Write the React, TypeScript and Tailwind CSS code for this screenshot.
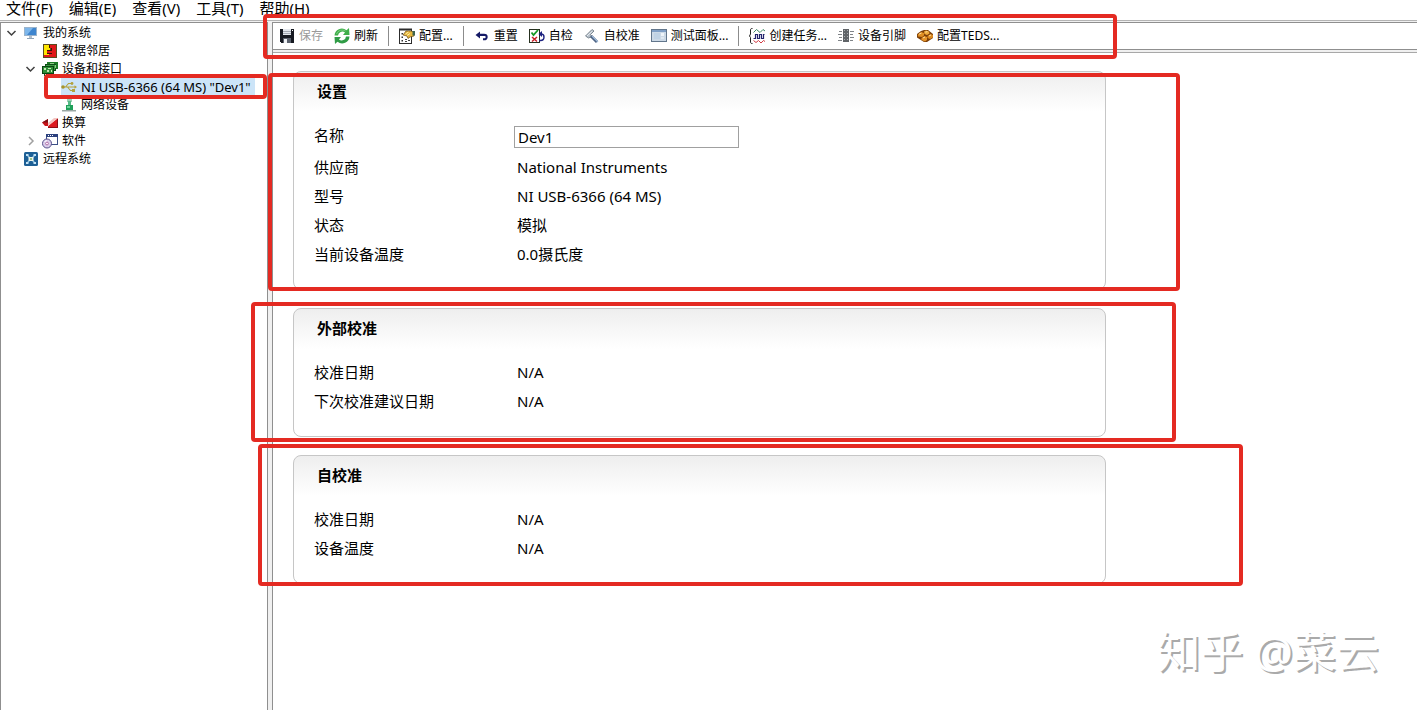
import type { ReactNode } from 'react';

/* ---------- icons ---------- */

function Icon({ children, crisp = false }: { children: ReactNode; crisp?: boolean }) {
  return (
    <svg
      viewBox="0 0 16 16"
      className="size-4 shrink-0"
      fill="none"
      aria-hidden="true"
      shapeRendering={crisp ? 'crispEdges' : 'auto'}
    >
      {children}
    </svg>
  );
}

const MonitorIcon = () => (
  <Icon>
    <rect x="1" y="2" width="13" height="9" fill="#9bb4cc" />
    <rect x="2" y="3" width="11" height="7" fill="#3f86cf" />
    <path d="M2 3h8L4 10H2z" fill="#7db6ea" />
    <path d="M6 11h3v2H6z" fill="#b4bfca" />
    <path d="M4 13h7v1H4z" fill="#90a4b8" />
  </Icon>
);

const NeighborhoodIcon = () => (
  <Icon crisp>
    <rect x="1" y="1" width="14" height="14" fill="#5a4a20" />
    <path d="M2 2h6v12H2z" fill="#ffe600" />
    <path d="M7 2h7v12H2v-2h5v-2H5V7h4V5H7z" fill="#e01818" />
    <path d="M2 2h5v3H5v5h2v2H2z" fill="#ffe600" />
    <path d="M7 2h1v3H7zM5 7h4v1H5zM5 10h5v1H5zM9 5h1v3H9z" fill="#3a1208" />
  </Icon>
);

const BoardsIcon = () => (
  <Icon crisp>
    <path d="M5 1h11v7H5z" fill="#1d7a26" />
    <path d="M3 3h11v7H3z" fill="#0e4f17" />
    <path d="M4 4h9v5H4z" fill="#3c9c42" />
    <path d="M0 5h12v8H0z" fill="#0b4413" />
    <path d="M1 6h10v6H1z" fill="#2f9038" />
    <path d="M2 7h2v2H2zM6 7h3v1H6zM5 9h2v2H5zM9 9h1v2H9z" fill="#c8e8b8" />
    <path d="M2 13h1v2H2zM4 13h1v2H4zM6 13h1v2H6zM8 13h1v2H8z" fill="#15601e" />
    <path d="M8 2h4v1H8zM13 4h1v3h-1z" fill="#8fca88" />
  </Icon>
);

const UsbIcon = () => (
  <Icon>
    <g stroke="#b3a23c" strokeWidth="1.1">
      <path d="M2 8h12M4.500 8l3-3.500h2.500M6.500 8l3 3.500h2" />
    </g>
    <circle cx="2" cy="8" r="1.800" fill="#a8952c" />
    <circle cx="11" cy="4.500" r="1.400" fill="#b3a23c" />
    <path d="M11 10h3v3h-3zM13.500 6.300 16 8l-2.500 1.700z" fill="#b3a23c" />
  </Icon>
);

const NetworkIcon = () => (
  <Icon>
    <path d="M6 1h5v4H6z" fill="#9bd0b4" />
    <path d="M7 4h3v5H7z" fill="#57b987" />
    <path d="M5 8h7v5H5z" fill="#1fa05a" />
    <path d="M6 9h3v2H6z" fill="#6fd59b" />
    <path d="M1 13h14v1.500H1z" fill="#9aa8a4" />
  </Icon>
);

const ScaleIcon = () => (
  <Icon>
    <path d="M0 7.500 6 4v7H3z" fill="#c8141a" />
    <path d="M0 7.500 6 4v3.500z" fill="#7e1014" />
    <path d="M6 11 16 3v10H6z" fill="#dc1b20" />
    <path d="M6 11V8L12 3h4z" fill="#f4c6c2" />
    <path d="M6 12.500h10M15.500 4v9" stroke="#8e0f14" />
  </Icon>
);

const SoftwareIcon = () => (
  <Icon>
    <rect x="4.500" y="1.500" width="11" height="10" fill="#fff" stroke="#3c4f86" />
    <path d="M4 1h12v3H4z" fill="#2c417e" />
    <path d="M6 2h1v1H6zM8 2h1v1H8zM10 2h1v1h-1z" fill="#fff" />
    <circle cx="5" cy="10.500" r="4.500" fill="#d9cdea" stroke="#57508c" />
    <path d="M5 10.500 2 8.500A3.700 3.700 0 0 1 5 7z" fill="#f4f0fb" />
    <circle cx="5" cy="10.500" r="1.400" fill="#fff" stroke="#b06aa8" />
  </Icon>
);

const RemoteIcon = () => (
  <Icon>
    <rect x="1" y="1" width="14" height="14" rx="1.500" fill="#1d5f95" />
    <path d="M3.500 3.500l9 9M12.500 3.500l-9 9" stroke="#8cc4e6" strokeWidth="1.300" />
    <path d="M3 3h2.500v2H3zM10.500 3H13v2h-2.500zM3 11h2.500v2H3zM10.500 11H13v2h-2.500z" fill="#c3e2f4" />
    <path d="M5.500 6h5v4h-5z" fill="#eef6ea" />
    <path d="M7 7h2v2H7z" fill="#9cc48a" />
  </Icon>
);

const SaveIcon = () => (
  <Icon crisp>
    <path d="M1 1h14v14H2l-1-1z" fill="#161a22" />
    <path d="M4 1h8v6H4z" fill="#e4e8ee" />
    <path d="M4 3h8v1H4zM4 5h8v1H4z" fill="#a4abb5" />
    <path d="M4 10h8v5H4z" fill="#5b626e" />
    <path d="M5 11h3v4H5z" fill="#f0f2f5" />
    <path d="M13 2h1v1h-1z" fill="#fff" />
  </Icon>
);

const RefreshIcon = () => (
  <Icon>
    <path d="M.500 7.500A7.300 7.300 0 0 1 12.500 2.300L15 0l.5 7H9l2-2.500A4.300 4.300 0 0 0 4 7.500z" fill="#3fae4a" />
    <path d="M15.500 8.500A7.300 7.300 0 0 1 3.500 13.700L1 16 .5 9H7l-2 2.500a4.300 4.300 0 0 0 7-3z" fill="#2f9c46" />
    <path d="M2.500 6A6 6 0 0 1 11.500 3" stroke="#86d48a" strokeWidth=".8" />
  </Icon>
);

const ConfigureIcon = () => (
  <Icon>
    <rect x=".5" y="1.500" width="12" height="14" fill="#fff" stroke="#2c2c2c" />
    <path d="M0 1.500h13" stroke="#2c2c2c" strokeWidth="2" />
    <path d="M2.500 5H4v1.500H2.500zM2.500 8.500H4V10H2.500zM2.500 12H4v1.500H2.500z" fill="#333" />
    <path d="M6 11.500h2M9 12.500h2M6 13.500h2" stroke="#444" />
    <path d="m4 7 3-4h5l3 1v4l-4 1-2 1.500L8 8z" fill="#e8b73c" stroke="#6b4a12" strokeWidth=".7" />
    <path d="m6.500 6 3-2M8 7.500l3-2" stroke="#fff0a8" />
    <path d="M13.500 3H16v4.500h-2.500z" fill="#3f6450" />
  </Icon>
);

const ResetIcon = () => (
  <Icon>
    <path d="M1.500 7 6 3.500v2.300h4c2.500 0 3.700 1.200 3.700 3.100 0 2-1.300 3.400-3.700 3.400H9v-2h1c1.200 0 1.700-.5 1.700-1.300S11.200 8 10 8H6v2.500z" fill="#151a66" />
  </Icon>
);

const SelfTestIcon = () => (
  <Icon>
    <rect x=".5" y="1.500" width="10" height="13" fill="#fff" stroke="#26301f" />
    <path d="m2.500 4.500 2 2.500L9 2" stroke="#169a27" strokeWidth="1.800" />
    <path d="m3 9 5 4.500M8 9l-5 4.500" stroke="#c71f27" strokeWidth="1.500" />
    <path d="M10 12.500h1.500c2.300 0 3.500-1.300 3.500-3.500S14 6 12 6" stroke="#1d2280" strokeWidth="1.400" />
    <path d="m13 3-3.500 3L13 9z" fill="#1d2280" />
  </Icon>
);

const CalibrateIcon = () => (
  <Icon>
    <path d="m1.500 8 6.500-6.500L10 3 6.500 6.500l1.500 2L4.500 10z" fill="#b4bec8" stroke="#66737f" strokeWidth=".8" />
    <path d="m3 8 5.500-5" stroke="#edf2f6" />
    <path d="m7 8 6 6" stroke="#4d6384" strokeWidth="3" />
    <path d="m8 8 6 6" stroke="#a3bddb" strokeWidth="1.100" />
  </Icon>
);

const PanelIcon = () => (
  <Icon crisp>
    <rect x="0" y="1" width="16" height="13" fill="#62768c" />
    <path d="M1 2h14v2H1z" fill="#7f9fc6" />
    <path d="M1 4h14v9H1z" fill="#ccd9e6" />
    <path d="M3 5h6v6H3z" fill="#c0d2e4" />
    <path d="M10 5h3v3h-3z" fill="#eef4f9" />
    <path d="M10 9h3v2h-3z" fill="#dfe8f1" />
  </Icon>
);

const TaskIcon = () => (
  <Icon>
    <path d="M3.500.500H3c-1 0-1.500.5-1.500 1.500v4L.500 8l1 1.500V14c0 1 .5 1.500 1.500 1.500h.5" stroke="#222" />
    <path d="m4.500 4.500 3-3 3.500 3 3-3 2 1.500" stroke="#3f8a66" />
    <path d="M4.500 10.500h2v-4h2v4h2v-4h2v4h2v-4h1" stroke="#24246e" strokeWidth="1.200" />
    <path d="m4.500 12.500 2.500 2 2.500-2 2.500 2.500 2.500-2.500 1.500 1" stroke="#d13a42" />
  </Icon>
);

const PinsIcon = () => (
  <Icon crisp>
    <rect x="5" y="1" width="6" height="13" fill="#606468" />
    <path d="M6 2h1v1H6zM9 2h1v1H9zM6 5h1v1H6zM9 5h1v1H9zM6 8h1v1H6zM9 8h1v1H9zM6 11h1v1H6zM9 11h1v1H9z" fill="#a8acb0" />
    <path d="M1 3h3v1H1zM0 6h4v1H0zM1 9h3v1H1zM0 12h4v1H0zM12 3h4v1h-4zM12 6h3v1h-3zM12 9h4v1h-4zM12 12h3v1h-3z" fill="#808488" />
  </Icon>
);

const TedsIcon = () => (
  <Icon>
    <path d="m0 6 4-3 3-1h4l5 4v4l-6 4H7L0 9.500z" fill="#7c3f08" />
    <path d="m.8 6.500 3.200-2.500 3 1v2.500L5 9 1 8.500z" fill="#e08e22" />
    <path d="m7 3.500 2-1 3 1 .5 2L10 7 7.500 6z" fill="#f0ab3c" />
    <path d="m10.500 8 3-2L16 7v2.500l-3 1.500-2.500-1z" fill="#de8a20" />
    <path d="m4.500 10 3-2 2.500 1v3l-2 1.500-3.500-1.500z" fill="#e59328" />
    <path d="m2 6.200 2.500-1.200M8.500 4.200l2-.7M12 8l2-1M6 10l2-1" stroke="#ffe09a" />
  </Icon>
);

/* ---------- menu bar ---------- */

const menus = ['文件(F)', '编辑(E)', '查看(V)', '工具(T)', '帮助(H)'];

function MenuBar() {
  return (
    <nav className="flex h-5 items-start gap-4 pl-[6px] text-[15px] leading-4">
      {menus.map((menu) => (
        <button key={menu} type="button" className="whitespace-nowrap">
          {menu}
        </button>
      ))}
    </nav>
  );
}

/* ---------- tree ---------- */

type Node = {
  label: string;
  icon: ReactNode;
  level: 0 | 1 | 2;
  state?: 'open' | 'closed';
  selected?: boolean;
};

const nodes: Node[] = [
  { label: '我的系统', icon: <MonitorIcon />, level: 0, state: 'open' },
  { label: '数据邻居', icon: <NeighborhoodIcon />, level: 1 },
  { label: '设备和接口', icon: <BoardsIcon />, level: 1, state: 'open' },
  { label: 'NI USB-6366 (64 MS) "Dev1"', icon: <UsbIcon />, level: 2, selected: true },
  { label: '网络设备', icon: <NetworkIcon />, level: 2 },
  { label: '换算', icon: <ScaleIcon />, level: 1 },
  { label: '软件', icon: <SoftwareIcon />, level: 1, state: 'closed' },
  { label: '远程系统', icon: <RemoteIcon />, level: 0 },
];

const indent = { 0: 'pl-[3px]', 1: 'pl-[22px]', 2: 'pl-[41px]' };

function Chevron({ state }: { state?: 'open' | 'closed' }) {
  return (
    <svg viewBox="0 0 16 16" className="size-4 shrink-0" fill="none" aria-hidden="true">
      {state === 'open' && <path d="m3.500 6 4 4 4-4" stroke="#404040" strokeWidth="1.500" />}
      {state === 'closed' && <path d="m6 4 4 4-4 4" stroke="#a0a0a0" strokeWidth="1.500" />}
    </svg>
  );
}

function Tree() {
  return (
    <ul role="tree" className="pt-px text-[12px] leading-[18px]">
      {nodes.map((node) => (
        <li
          key={node.label}
          role="treeitem"
          aria-selected={!!node.selected}
          aria-expanded={node.state ? node.state === 'open' : undefined}
          className={`flex h-[18px] items-center gap-[3px] ${indent[node.level]}`}
        >
          <Chevron state={node.state} />
          <span
            className={`flex items-center gap-1 whitespace-nowrap ${node.selected ? 'bg-[#cce4f8] pr-1 text-[13px]' : ''}`}
          >
            {node.icon}
            {node.label}
          </span>
        </li>
      ))}
    </ul>
  );
}

/* ---------- toolbar ---------- */

function Tool({ icon, label, disabled }: { icon: ReactNode; label: string; disabled?: boolean }) {
  return (
    <button
      type="button"
      disabled={disabled}
      className="flex items-center gap-1 whitespace-nowrap disabled:text-[#9a9a9a]"
    >
      {icon}
      {label}
    </button>
  );
}

const Divider = () => <span className="mx-[-1px] h-5 w-px bg-[#8c8c8c]" />;

function Toolbar() {
  return (
    <div
      role="toolbar"
      className="flex h-[28px] items-center gap-[11px] border-y border-[#8f8f8f] pl-[6px] text-[12px] leading-4"
    >
      <Tool icon={<SaveIcon />} label="保存" disabled />
      <Tool icon={<RefreshIcon />} label="刷新" />
      <Divider />
      <Tool icon={<ConfigureIcon />} label="配置..." />
      <Divider />
      <Tool icon={<ResetIcon />} label="重置" />
      <Tool icon={<SelfTestIcon />} label="自检" />
      <Tool icon={<CalibrateIcon />} label="自校准" />
      <Tool icon={<PanelIcon />} label="测试面板..." />
      <Divider />
      <Tool icon={<TaskIcon />} label="创建任务..." />
      <Tool icon={<PinsIcon />} label="设备引脚" />
      <Tool icon={<TedsIcon />} label="配置TEDS..." />
    </div>
  );
}

/* ---------- detail cards ---------- */

function Card({ title, children }: { title: string; children: ReactNode }) {
  return (
    <section className="rounded-lg border border-[#c6c6c6] bg-linear-to-b from-[#eeeeee] to-white to-[40px] px-5 pt-[7px] pb-5">
      <h2 className="mb-[18px] pl-[3px] text-[15px] leading-6 font-bold">{title}</h2>
      {children}
    </section>
  );
}

function Rows({ rows }: { rows: [string, string][] }) {
  return (
    <dl className="text-[15px] leading-[29px]">
      {rows.map(([name, value]) => (
        <div key={name} className="flex">
          <dt className="w-[200px]">{name}</dt>
          <dd className="pl-[3px]">{value}</dd>
        </div>
      ))}
    </dl>
  );
}

/* ---------- red marker frames ---------- */

function Frame({ place }: { place: string }) {
  return <div className={`pointer-events-none absolute rounded-[4px] border-4 border-[#e42a22] ${place}`} />;
}

export default function App() {
  return (
    <div className="relative flex min-h-screen flex-col overflow-hidden bg-white font-['Noto_Sans','Noto_Sans_CJK_SC',sans-serif] text-black">
      <MenuBar />
      <div className="flex grow border-t border-[#b4b4b4] bg-[#f0f0f0] pt-px">
        <aside className="w-[268px] shrink-0 border border-b-0 border-[#8f8f8f] bg-white">
          <Tree />
        </aside>
        <main className="ml-1 grow border-l border-[#8f8f8f] bg-white">
          <Toolbar />
          <div className="h-[3px] border-b border-[#a8a8a8] bg-[#f0f0f0]" />
          <div className="flex w-[833px] max-w-full flex-col gap-[18px] pt-[18px] pl-5">
            <Card title="设置">
              <div className="flex h-8 items-center text-[15px] leading-[29px]">
                <label htmlFor="device-name" className="w-[200px] self-start">
                  名称
                </label>
                <input
                  id="device-name"
                  defaultValue="Dev1"
                  className="h-[22px] w-[225px] border border-[#a0a0a0] bg-white px-[3px] leading-5"
                />
              </div>
              <Rows
                rows={[
                  ['供应商', 'National Instruments'],
                  ['型号', 'NI USB-6366 (64 MS)'],
                  ['状态', '模拟'],
                  ['当前设备温度', '0.0摄氏度'],
                ]}
              />
            </Card>
            <Card title="外部校准">
              <Rows
                rows={[
                  ['校准日期', 'N/A'],
                  ['下次校准建议日期', 'N/A'],
                ]}
              />
            </Card>
            <Card title="自校准">
              <Rows
                rows={[
                  ['校准日期', 'N/A'],
                  ['设备温度', 'N/A'],
                ]}
              />
            </Card>
          </div>
        </main>
      </div>

      <Frame place="top-[14px] left-[263px] h-[45px] w-[854px]" />
      <Frame place="top-[74px] left-[44px] h-[25px] w-[223px]" />
      <Frame place="top-[73px] left-[268px] h-[218px] w-[912px]" />
      <Frame place="top-[302px] left-[251px] h-[140px] w-[925px]" />
      <Frame place="top-[444px] left-[258px] h-[142px] w-[985px]" />

      <p className="absolute right-[38px] bottom-[34px] text-[43px] leading-[48px] whitespace-nowrap text-white [text-shadow:2px_2px_0_#aaaaaa]">
        知乎 @菜云
      </p>
    </div>
  );
}
